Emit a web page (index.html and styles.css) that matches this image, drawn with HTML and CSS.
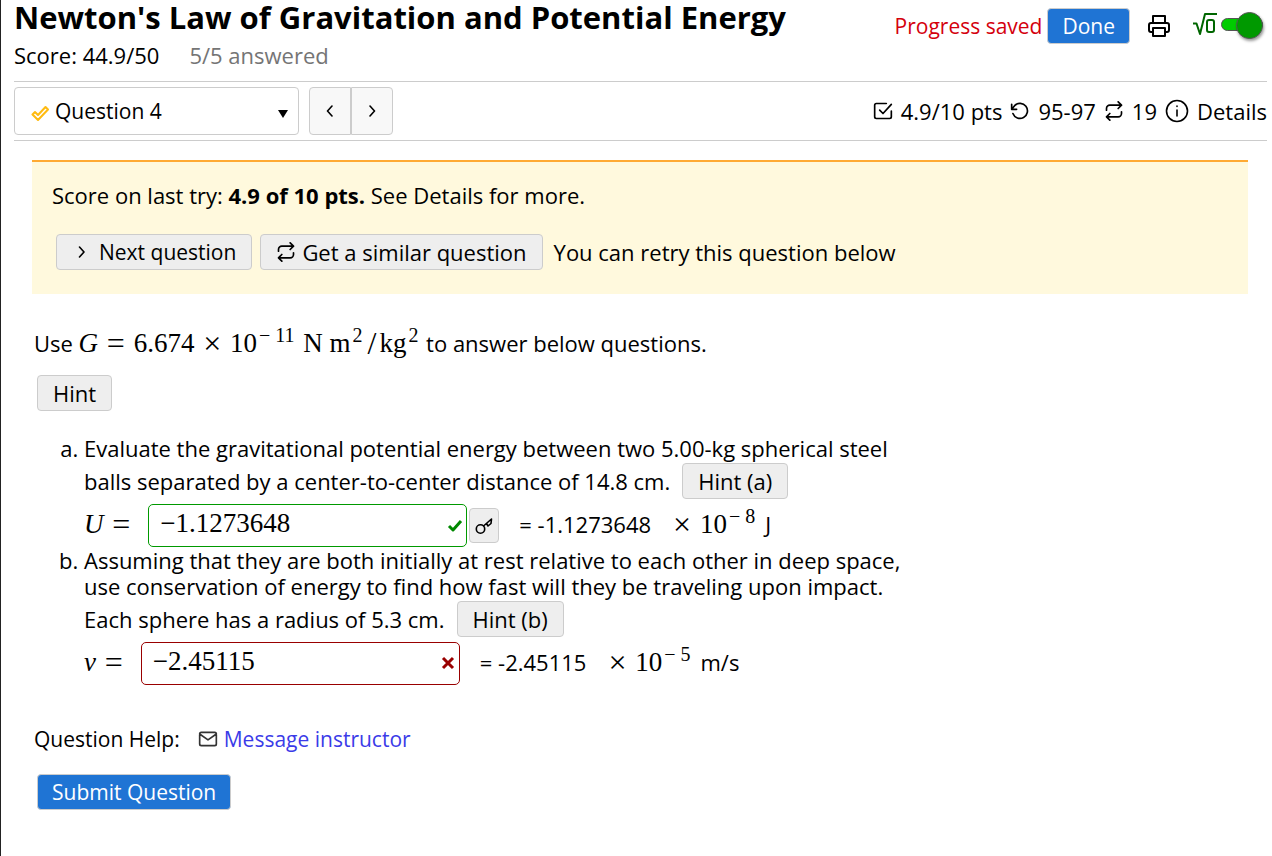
FILE: index.html
```html
<!DOCTYPE html>
<html lang="en">
<head>
  <meta charset="UTF-8" />
  <meta name="viewport" content="width=device-width, initial-scale=1.0" />
  <title>Newton's Law of Gravitation and Potential Energy</title>
  <link rel="stylesheet" href="styles.css">
</head>
<body>
  <header class="assess-header">
    <div class="title-block">
      <h1>Newton's Law of Gravitation and Potential Energy</h1>
      <div class="score-line">
        <span>Score: 44.9/50</span>
        <span class="answered">5/5 answered</span>
      </div>
    </div>
    <div class="header-tools">
      <span class="saved">Progress saved</span>
      <button class="btn primary">Done</button>
      <button class="icon-btn print" aria-label="Print">
        <svg width="24" height="24" viewBox="0 0 24 24"><path d="M6 9V2h12v7M6 18H4a2 2 0 0 1-2-2v-5a2 2 0 0 1 2-2h16a2 2 0 0 1 2 2v5a2 2 0 0 1-2 2h-2M6 14h12v8H6z"/></svg>
      </button>
      <label class="math-toggle">
        <svg class="root-icon" width="24" height="24" viewBox="0 0 24 24"><path d="M0 11.500h3.500L7 22 12 2h12"/><rect x="14" y="8" width="7" height="12" rx="2"/></svg>
        <input type="checkbox" class="switch" aria-label="Equation editor" checked>
      </label>
    </div>
  </header>

  <nav class="question-nav">
    <div class="question-select">
      <svg class="status-icon" width="18" height="18" viewBox="0 0 18 18"><path d="M1.500 10.500l2.500-2.500 3 3L14.500 3l2.500 2.500L7 16z"/></svg>
      <select aria-label="Question">
        <option>Question 4</option>
      </select>
      <svg class="caret" width="10" height="8" viewBox="0 0 10 8"><path d="M0 0h10L5 8z"/></svg>
    </div>
    <div class="step-buttons">
      <button aria-label="Previous question"><svg width="8" height="12" viewBox="0 0 8 12"><path d="M6 1L1.500 6 6 11"/></svg></button>
      <button aria-label="Next question"><svg width="8" height="12" viewBox="0 0 8 12"><path d="M2 1l4.500 5L2 11"/></svg></button>
    </div>
    <div class="question-info">
      <svg width="20" height="20" viewBox="0 0 24 24"><path d="M8 11l4 4L22 4M22 12v7a2 2 0 0 1-2 2H4a2 2 0 0 1-2-2V5a2 2 0 0 1 2-2h12"/></svg>
      <span>4.9/10 pts</span>
      <svg width="20" height="20" viewBox="0 0 24 24"><path d="M2 4v6h6M3.500 15a9 9 0 1 0 2-9.400L2 10"/></svg>
      <span>95-97</span>
      <svg width="20" height="20" viewBox="0 0 24 24"><path d="M17 1l4 4-4 4M3 11V9a4 4 0 0 1 4-4h14M7 23l-4-4 4-4M21 13v2a4 4 0 0 1-4 4H3"/></svg>
      <span>19</span>
      <a href="#" class="details">
        <svg width="24" height="24" viewBox="0 0 24 24"><circle cx="12" cy="12" r="10.500"/><path d="M12 17v-6M12 7v.5"/></svg>
        Details
      </a>
    </div>
  </nav>

  <main class="question">
    <div class="notice">
      <p>Score on last try: <strong>4.9 of 10 pts.</strong> See Details for more.</p>
      <div class="notice-actions">
        <button class="btn next"><svg width="8" height="12" viewBox="0 0 8 12"><path d="M1.500 1L6 6l-4.500 5"/></svg>Next question</button>
        <button class="btn similar"><svg width="20" height="20" viewBox="0 0 24 24"><path d="M17 1l4 4-4 4M3 11V9a4 4 0 0 1 4-4h14M7 23l-4-4 4-4M21 13v2a4 4 0 0 1-4 4H3"/></svg>Get a similar question</button>
        <span>You can retry this question below</span>
      </div>
    </div>

    <div class="question-body">
      <p class="given">Use <span class="math"><i>G</i> <span class="rel">=</span> 6.674 <span class="op">×</span> 10<sup>− 11</sup> N m<sup>2</sup><span class="slash">/</span>kg<sup>2</sup></span> to answer below questions.</p>
      <button class="btn">Hint</button>

      <ol class="parts" type="a">
        <li>
          <p>Evaluate the gravitational potential energy between two 5.00-kg spherical steel</p>
          <p class="hint-line"><span>balls separated by a center-to-center distance of 14.8 cm.</span><button class="btn">Hint (a)</button></p>
          <div class="answer">
            <label class="math" for="ans-a"><i>U</i> <span class="rel">=</span></label>
            <div class="answer-box right">
              <input type="text" id="ans-a" value="−1.1273648">
              <svg width="16" height="16" viewBox="0 0 16 16"><path d="M2 8l4 4 8-9"/></svg>
            </div>
            <button class="key-btn" aria-label="Show answer"><svg width="18" height="18" viewBox="0 0 18 18"><circle cx="5.500" cy="12" r="4.200"/><path d="M8.500 9l8-7M11.500 6.500l1.500 2.500 3-2.500.5-4.500"/></svg></button>
            <span class="preview">= -1.1273648</span>
            <span class="math"><span class="op">×</span> 10<sup>− 8</sup></span>
            <span class="unit">J</span>
          </div>
        </li>
        <li>
          <p>Assuming that they are both initially at rest relative to each other in deep space,</p>
          <p>use conservation of energy to find how fast will they be traveling upon impact.</p>
          <p class="hint-line"><span>Each sphere has a radius of 5.3 cm.</span><button class="btn">Hint (b)</button></p>
          <div class="answer">
            <label class="math" for="ans-b"><i>v</i> <span class="rel">=</span></label>
            <div class="answer-box wrong">
              <input type="text" id="ans-b" value="−2.45115">
              <svg width="16" height="16" viewBox="0 0 16 16"><path d="M3 2l10 10M13 2L3 12"/></svg>
            </div>
            <span class="preview">= -2.45115</span>
            <span class="math"><span class="op">×</span> 10<sup>− 5</sup></span>
            <span class="unit">m/s</span>
          </div>
        </li>
      </ol>

      <div class="help">
        <span>Question Help:</span>
        <a href="#"><svg width="20" height="20" viewBox="0 0 24 24"><path d="M4 4h16a2 2 0 0 1 2 2v12a2 2 0 0 1-2 2H4a2 2 0 0 1-2-2V6a2 2 0 0 1 2-2zM22 6l-10 7L2 6"/></svg>Message instructor</a>
      </div>
      <button class="btn primary">Submit Question</button>
    </div>
  </main>
</body>
</html>
```

FILE: styles.css
```css
* {
  margin: 0;
  padding: 0;
  box-sizing: border-box;
}

body {
  min-height: 100vh;
  padding: 0 5px 0 13px;
  border-left: 1px solid #222;
  background-color: #fff;
  color: #000;
  font-family: "Trebuchet MS", "Open Sans", sans-serif;
  font-size: 22px;
  line-height: 26px;
}

button, input, select {
  font: inherit;
  color: inherit;
}

button {
  cursor: pointer;
}

svg {
  flex: none;
  fill: none;
  stroke: currentColor;
  stroke-width: 2;
  stroke-linecap: round;
  stroke-linejoin: round;
}

.btn {
  display: inline-flex;
  align-items: center;
  height: 36px;
  padding: 0 15px;
  border: 1px solid #ccc;
  border-radius: 4px;
  background-color: #eee;
  white-space: nowrap;
}

.btn.primary {
  padding: 0 14px;
  background-color: #1f74d4;
  color: #fff;
}

.btn.primary,
.btn.next {
  font-size: 21px;
}

/* header */
.assess-header {
  display: flex;
  justify-content: space-between;
  height: 81px;
  white-space: nowrap;
}

h1 {
  font-size: 31px;
  line-height: 34px;
}

.score-line {
  display: flex;
  gap: 30px;
  padding-top: 8px;
}

.answered {
  color: #757575;
}

.header-tools {
  display: flex;
  align-items: center;
  height: 52px;
  padding-right: 4px;
  font-size: 21px;
}

.saved {
  margin-right: 5px;
  color: #d4000d;
}

.icon-btn {
  display: flex;
  margin: 0 22px 0 17px;
  border: none;
  background: none;
}

.math-toggle {
  display: flex;
  align-items: center;
  gap: 4px;
  padding-bottom: 4px;
}

.root-icon {
  color: #060;
}

.switch {
  position: relative;
  width: 42px;
  height: 13px;
  border: 1px solid #555;
  border-radius: 7px;
  background-color: #0c0;
  appearance: none;
}

.switch::after {
  content: "";
  position: absolute;
  top: -7px;
  right: -1px;
  width: 25px;
  height: 25px;
  border: 1px solid #555;
  border-radius: 50%;
  background-color: #090;
  box-shadow: 1px 2px 3px rgba(0, 0, 0, 0.4);
}

/* question bar */
.question-nav {
  display: flex;
  align-items: center;
  padding: 5px 0;
  border-top: 1px solid #ccc;
  border-bottom: 1px solid #ccc;
}

.question-select {
  position: relative;
  width: 285px;
}

.question-select select {
  display: block;
  width: 100%;
  height: 48px;
  padding: 0 36px 0 40px;
  border: 1px solid #ccc;
  border-radius: 4px;
  background-color: #fff;
  font-size: 21px;
  appearance: none;
}

.status-icon {
  position: absolute;
  top: 17px;
  left: 17px;
  color: #fb1;
}

.caret {
  position: absolute;
  top: 23px;
  right: 11px;
  fill: #000;
  stroke: none;
}

.step-buttons {
  display: flex;
  margin-left: 10px;
}

.step-buttons button {
  display: flex;
  align-items: center;
  justify-content: center;
  width: 42px;
  height: 48px;
  border: 1px solid #ccc;
  border-radius: 4px 0 0 4px;
  background-color: #f8f8f8;
}

.step-buttons button:last-child {
  border-radius: 0 4px 4px 0;
}

.question-info {
  display: flex;
  align-items: center;
  gap: 8px;
  margin-left: auto;
}

.question-info a {
  display: flex;
  align-items: center;
  gap: 8px;
  color: inherit;
  text-decoration: none;
}

.step-buttons svg,
.next svg,
.details svg,
.key-btn svg {
  stroke-width: 1.6;
}

/* score notice */
.question {
  padding: 19px 19px 0 18px;
}

.notice {
  padding: 20px 20px 24px;
  border-top: 2px solid #fa3;
  background-color: #fff9dd;
}

.notice-actions {
  display: flex;
  align-items: center;
  gap: 8px;
  margin-top: 26px;
  padding-left: 4px;
}

.notice-actions span {
  margin-left: 3px;
}

.next svg {
  margin: 0 13px 0 6px;
}

.similar svg {
  margin-right: 6px;
}

/* question text */
.question-body {
  padding: 29px 0 0 2px;
}

.question-body > .btn {
  margin-left: 3px;
}

.given {
  height: 40px;
  margin-bottom: 12px;
  line-height: 40px;
}

.math {
  font-family: "Liberation Serif", serif;
  font-size: 27px;
  white-space: nowrap;
}

.math sup {
  margin: 0 2px;
  font-size: 20px;
  line-height: 0;
}

.rel,
.op,
.slash {
  margin: 0 2px;
  font-size: 32px;
  line-height: 0;
  vertical-align: -2px;
}

.slash {
  margin: 0 3px;
}

.parts {
  margin-top: 24px;
  padding-left: 50px;
}

.hint-line {
  display: flex;
  align-items: center;
  gap: 12px;
  padding: 2px 0 3px;
}

.answer {
  display: flex;
  align-items: center;
  height: 43px;
  margin-top: 2px;
}

.answer > span,
.answer > label {
  padding-bottom: 4px;
}

.answer-box {
  display: flex;
  align-items: center;
  width: 319px;
  height: 43px;
  margin-left: 16px;
  padding: 0 3px 0 11px;
  border: 1px solid #090;
  border-radius: 5px;
}

.answer-box input {
  flex: 1;
  min-width: 0;
  padding-bottom: 5px;
  border: none;
  outline: none;
  font-family: "Liberation Serif", serif;
  font-size: 27px;
}

.answer-box svg {
  stroke-width: 3;
  stroke-linecap: butt;
}

.right svg {
  color: #080;
}

.wrong {
  border-color: #900;
}

.wrong svg {
  color: #900;
}

.key-btn {
  display: flex;
  align-items: center;
  justify-content: center;
  width: 30px;
  height: 35px;
  margin-left: 2px;
  border: 1px solid #ccc;
  border-radius: 4px;
  background-color: #eee;
}

.preview {
  margin: 0 20px;
}

.unit {
  margin-left: 8px;
}

.help {
  display: flex;
  gap: 18px;
  margin: 41px 0 22px;
  font-size: 21px;
}

.help a {
  display: flex;
  align-items: center;
  gap: 6px;
  color: #3b3be8;
  text-decoration: none;
}

.help svg {
  color: #333;
}
```
